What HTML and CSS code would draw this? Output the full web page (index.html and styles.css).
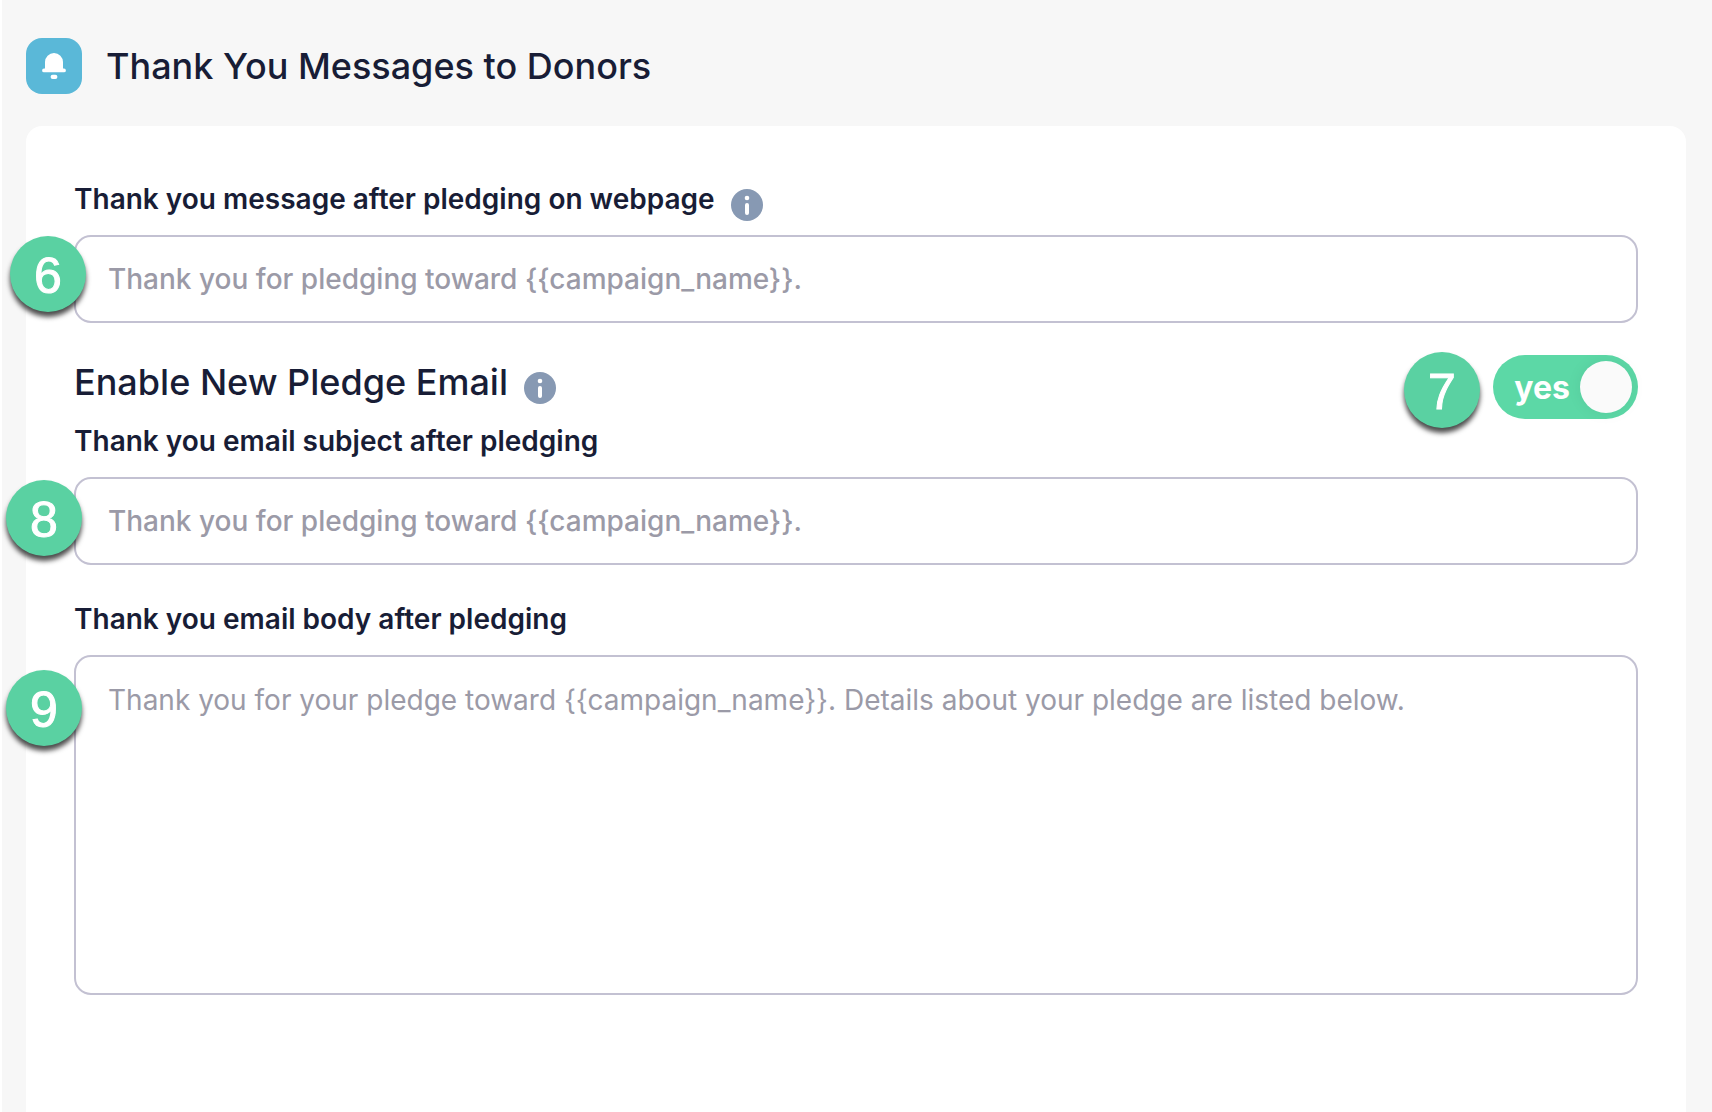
FILE: index.html
```html
<!DOCTYPE html>
<html lang="en">
<head>
<meta charset="utf-8">
<meta name="viewport" content="width=device-width, initial-scale=1">
<title>Thank You Messages to Donors</title>
<link rel="stylesheet" href="styles.css">
</head>
<body>
<main class="page">
  <header class="page-header">
    <span class="page-icon">
      <svg width="24" height="28" viewBox="0 0 24 28" fill="#fff" aria-hidden="true">
        <path d="M3 10a9 9 0 0 1 18 0v6.5h1a1.9 1.9 0 0 1 0 3.8H2a1.9 1.9 0 0 1 0-3.8h1z"/>
        <rect x="8.6" y="22.8" width="6.8" height="4.2" rx="2"/>
      </svg>
    </span>
    <h1 class="heading">Thank You Messages to Donors</h1>
  </header>

  <form class="card">
    <div class="label-row">
      <label class="label" for="web-message">Thank you message after pledging on webpage</label>
      <svg class="info" viewBox="0 0 32 32" role="img" aria-label="Info">
        <circle cx="16" cy="16" r="16" fill="#8799b3"/>
        <circle cx="16" cy="9" r="2.3" fill="#fff"/>
        <rect x="14" y="14" width="4" height="12" rx="2" fill="#fff"/>
      </svg>
    </div>
    <div class="control">
      <input class="input" id="web-message" type="text" placeholder="Thank you for pledging toward {{campaign_name}}.">
      <span class="badge badge-first">6</span>
    </div>

    <div class="section">
      <div class="section-title">
        <h2 class="heading">Enable New Pledge Email</h2>
        <svg class="info" viewBox="0 0 32 32" role="img" aria-label="Info">
          <circle cx="16" cy="16" r="16" fill="#8799b3"/>
          <circle cx="16" cy="9" r="2.3" fill="#fff"/>
          <rect x="14" y="14" width="4" height="12" rx="2" fill="#fff"/>
        </svg>
      </div>
      <div class="control">
        <label class="switch">
          <span>yes</span>
          <input class="knob" type="checkbox" role="switch" aria-label="Enable New Pledge Email" checked>
        </label>
        <span class="badge badge-switch">7</span>
      </div>
    </div>

    <div class="label-row">
      <label class="label" for="email-subject">Thank you email subject after pledging</label>
    </div>
    <div class="control">
      <input class="input" id="email-subject" type="text" placeholder="Thank you for pledging toward {{campaign_name}}.">
      <span class="badge badge-input">8</span>
    </div>

    <div class="label-row label-row-spaced">
      <label class="label" for="email-body">Thank you email body after pledging</label>
    </div>
    <div class="control">
      <textarea class="input textarea" id="email-body" placeholder="Thank you for your pledge toward {{campaign_name}}. Details about your pledge are listed below."></textarea>
      <span class="badge badge-textarea">9</span>
    </div>
  </form>
</main>
</body>
</html>
```
FILE: styles.css
```css
* {
  box-sizing: border-box;
}

body {
  margin: 0;
  background: #fff;
  color: #181d36;
  font-family: Inter, "Liberation Sans", sans-serif;
}

.page {
  display: flex;
  flex-direction: column;
  min-height: 100vh;
  margin-left: 2px;
  padding: 38px 26px 0 24px;
  background: #f7f7f7;
}

.page-header {
  display: flex;
  align-items: center;
  gap: 24px;
  margin-bottom: 32px;
}

.page-icon {
  display: flex;
  align-items: center;
  justify-content: center;
  width: 56px;
  height: 56px;
  border-radius: 16px;
  background: #5ab8d8;
}

.heading {
  margin: 0;
  font-size: 36px;
  font-weight: 500;
  line-height: 54px;
}

.card {
  flex: 1;
  padding: 53px 48px 48px;
  border-radius: 16px 16px 0 0;
  background: #fff;
}

.label-row,
.section-title {
  display: flex;
  align-items: flex-end;
  gap: 16px;
}

.label-row {
  margin-bottom: 16px;
}

.label-row-spaced {
  margin-top: 34px;
}

.label {
  font-size: 28px;
  font-weight: 600;
  line-height: 40px;
}

.info {
  flex: none;
  width: 32px;
  height: 32px;
}

.label-row .info {
  margin-bottom: -2px;
}

.section-title .info {
  margin-bottom: 5px;
}

.control {
  position: relative;
}

.input {
  display: block;
  width: 100%;
  height: 88px;
  padding: 0 32px;
  border: 2px solid #c3c1d2;
  border-radius: 17px;
  background: #fff;
  color: #181d36;
  font: 500 28px/40px Inter, "Liberation Sans", sans-serif;
}

.input::placeholder {
  color: #9b9aa7;
  opacity: 1;
}

.textarea {
  height: 340px;
  padding: 23px 32px;
  font-weight: 400;
  resize: none;
}

.section {
  display: flex;
  align-items: flex-start;
  justify-content: space-between;
  margin: 32px 0 2px;
}

.switch {
  display: flex;
  align-items: center;
  justify-content: flex-end;
  gap: 10px;
  width: 145px;
  height: 64px;
  padding: 0 6px;
  border-radius: 32px;
  background: #5cd8a6;
  color: #fff;
  font-size: 32px;
  font-weight: 700;
}

.knob {
  appearance: none;
  flex: none;
  width: 52px;
  height: 52px;
  margin: 0;
  border-radius: 50%;
  background: #fafafa;
  box-shadow: 0 0 16px rgba(0, 0, 0, 0.06);
}

.badge {
  position: absolute;
  width: 76px;
  height: 76px;
  border-radius: 50%;
  background: #5ad1a2;
  box-shadow: 0 5px 5px rgba(0, 0, 0, 0.7);
  color: #fff;
  font-family: "Liberation Sans", Arial, sans-serif;
  font-size: 50px;
  line-height: 80px;
  text-align: center;
  -webkit-text-stroke: 1px #fff;
}

.badge-first {
  top: 1px;
  left: -64px;
}

.badge-switch {
  top: -3px;
  left: -89px;
}

.badge-input {
  top: 3px;
  left: -68px;
}

.badge-textarea {
  top: 15px;
  left: -68px;
}
```
